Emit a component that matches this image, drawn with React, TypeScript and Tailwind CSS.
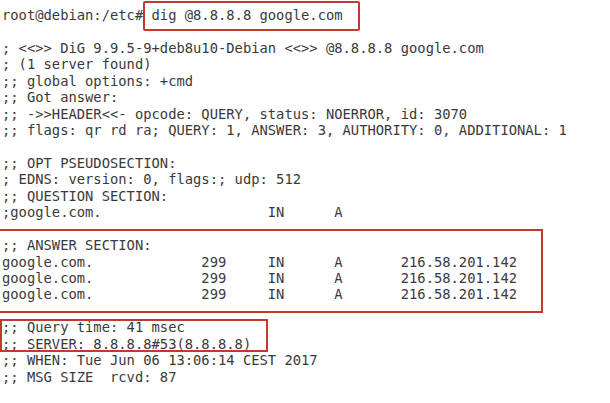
import React from "react";

const lines = [
  "root@debian:/etc# dig @8.8.8.8 google.com",
  "",
  "; <<>> DiG 9.9.5-9+deb8u10-Debian <<>> @8.8.8.8 google.com",
  "; (1 server found)",
  ";; global options: +cmd",
  ";; Got answer:",
  ";; ->>HEADER<<- opcode: QUERY, status: NOERROR, id: 3070",
  ";; flags: qr rd ra; QUERY: 1, ANSWER: 3, AUTHORITY: 0, ADDITIONAL: 1",
  "",
  ";; OPT PSEUDOSECTION:",
  "; EDNS: version: 0, flags:; udp: 512",
  ";; QUESTION SECTION:",
  ";google.com.\t\t\tIN\tA",
  "",
  ";; ANSWER SECTION:",
  "google.com.\t\t299\tIN\tA\t216.58.201.142",
  "google.com.\t\t299\tIN\tA\t216.58.201.142",
  "google.com.\t\t299\tIN\tA\t216.58.201.142",
  "",
  ";; Query time: 41 msec",
  ";; SERVER: 8.8.8.8#53(8.8.8.8)",
  ";; WHEN: Tue Jun 06 13:06:14 CEST 2017",
  ";; MSG SIZE  rcvd: 87",
];

export default function App() {
  return (
    <div className="relative w-[610px] h-[403px] bg-white overflow-hidden">
      <div
        className="pt-[7px] pl-[2px] text-[13.8px] leading-[16.45px] text-[#3a3a3a] whitespace-pre [tab-size:8]"
        style={{ fontFamily: '"DejaVu Sans Mono", monospace' }}
      >
        {lines.map((l, i) => (
          <div key={i} className="h-[16.45px]">
            {l}
          </div>
        ))}
      </div>
      <div className="absolute left-[143px] top-[1px] w-[217px] h-[30px] border-2 border-[#c4392e] rounded-[2px]" />
      <div className="absolute left-[-2px] top-[229px] w-[545px] h-[84px] border-2 border-[#c4392e]" />
      <div className="absolute left-[0px] top-[319px] w-[268px] h-[33px] border-2 border-[#c4392e]" />
    </div>
  );
}
